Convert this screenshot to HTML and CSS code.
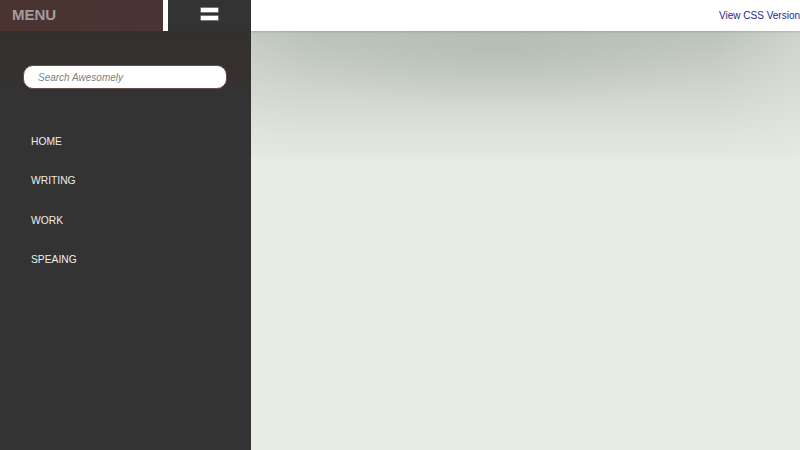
FILE: index.html
```html
<!DOCTYPE html>
<html>
<head>
<meta charset="utf-8">
<link rel="stylesheet" href="styles.css">
</head>
<body>
<div class="page">
  <aside class="sidebar">
    <div class="side-head">
      <div class="menu-label">MENU</div>
      <div class="divider"></div>
      <div class="toggle">
        <span class="bar"></span>
        <span class="bar"></span>
      </div>
    </div>
    <div class="search-wrap">
      <input class="search" type="text" placeholder="Search Awesomely">
    </div>
    <nav class="nav">
      <a href="#" class="nav-item">HOME</a>
      <a href="#" class="nav-item">WRITING</a>
      <a href="#" class="nav-item">WORK</a>
      <a href="#" class="nav-item">SPEAING</a>
    </nav>
  </aside>
  <main class="main">
    <div class="topbar">
      <a href="#" class="css-link">View CSS Version</a>
    </div>
    <div class="hero"></div>
    <div class="content"></div>
  </main>
</div>
</body>
</html>
```

FILE: styles.css
```css
html, body {
  margin: 0;
  padding: 0;
  height: 100%;
}
body {
  font-family: "Liberation Sans", Arial, sans-serif;
  background: #e6ece4;
}
.page {
  display: flex;
  height: 450px;
  overflow: hidden;
}
.sidebar {
  width: 251px;
  flex: 0 0 251px;
  background: #333333;
  display: flex;
  flex-direction: column;
}
.side-head {
  display: flex;
  height: 31px;
  background: #333333;
}
.menu-label {
  width: 151px;
  padding-left: 12px;
  background: linear-gradient(90deg, #4a3331 0%, #483634 100%);
  color: #a59c9b;
  font-weight: bold;
  font-size: 15px;
  line-height: 30px;
}
.divider {
  width: 5px;
  background: #ffffff;
}
.toggle {
  flex: 1;
  display: flex;
  flex-direction: column;
  align-items: center;
  padding-top: 8px;
  gap: 4px;
}
.bar {
  display: block;
  width: 17px;
  height: 4px;
  background: #ffffff;
  box-shadow: 0 0 0 0.5px #bbbbbb;
}
.search-wrap {
  padding: 34px 24px 0 23px;
  background: linear-gradient(180deg, #353030 0%, #343131 100%);
}
.search {
  box-sizing: border-box;
  width: 204px;
  height: 24px;
  border: 1px solid #6a4d4c;
  border-radius: 10px;
  background: #ffffff;
  padding: 0 0 0 14px;
  font-family: "Liberation Sans", Arial, sans-serif;
  font-size: 10px;
  font-style: italic;
  outline: none;
  display: block;
}
.search::placeholder {
  color: #808080;
}
.nav {
  display: flex;
  flex-direction: column;
  padding-top: 33px;
}
.nav-item {
  display: flex;
  align-items: center;
  height: 39.33px;
  padding-left: 31px;
  color: #eeeeee;
  text-decoration: none;
  font-size: 10.3px;
}
.main {
  flex: 1;
  display: flex;
  flex-direction: column;
}
.topbar {
  height: 31px;
  background: #ffffff;
  display: flex;
  justify-content: flex-end;
  align-items: center;
  box-shadow: 0 1px 2px rgba(0,0,0,0.15);
  position: relative;
  z-index: 1;
}
.css-link {
  color: #25258f;
  text-decoration: none;
  font-size: 10px;
}
.hero {
  height: 127px;
  background:
    radial-gradient(ellipse 60% 70% at 45% 15%, rgba(160,170,160,0.35), rgba(160,170,160,0) 70%),
    linear-gradient(90deg, rgba(230,236,228,0.15) 0%, rgba(230,236,228,0) 10%, rgba(230,236,228,0) 85%, rgba(230,236,228,0.4) 100%),
    linear-gradient(180deg, #bcc3bb 0%, #cbd1c9 35%, #dde3db 80%, #e3e9e1 100%);
}
.content {
  flex: 1;
  background: #e6ece4;
}
```
